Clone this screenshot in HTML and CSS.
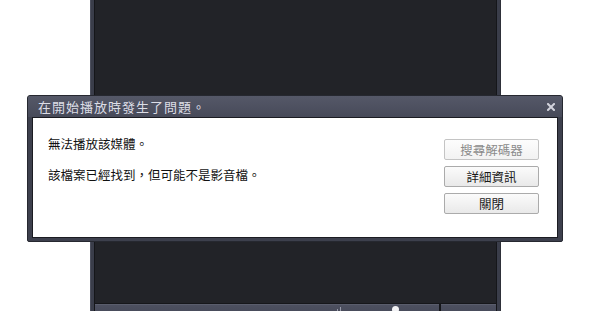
FILE: index.html
```html
<!DOCTYPE html>
<html lang="zh-Hant">
<head>
<meta charset="utf-8">
<title>播放錯誤</title>
<link rel="stylesheet" href="styles.css">
</head>
<body>
<div class="desktop">
  <div class="player">
    <div class="player-inner">
      <div class="video"></div>
      <div class="controls">
        <div class="seek">
          <span class="vol-icon"><i></i><i></i></span>
          <span class="knob"></span>
        </div>
        <div class="side"></div>
      </div>
    </div>
  </div>

  <div class="dialog">
    <div class="titlebar">
      <span class="title">在開始播放時發生了問題。</span>
      <svg class="close" width="8" height="8" viewBox="0 0 8 8"><path d="M1 1L7 7M7 1L1 7" stroke="#d2d3dc" stroke-width="2" stroke-linecap="square"/></svg>
    </div>
    <div class="content">
      <div class="messages">
        <p class="msg">無法播放該媒體。</p>
        <p class="msg">該檔案已經找到，但可能不是影音檔。</p>
      </div>
      <div class="buttons">
        <button class="btn" disabled>搜尋解碼器</button>
        <button class="btn">詳細資訊</button>
        <button class="btn">關閉</button>
      </div>
    </div>
  </div>
</div>
</body>
</html>
```

FILE: styles.css
```css
html, body {
  margin: 0;
  padding: 0;
  background: #ffffff;
  overflow: hidden;
}

.desktop {
  position: relative;
  width: 593px;
  height: 311px;
  font-family: "Noto Sans CJK TC", "Noto Sans", sans-serif;
}

/* background media player window */
.player {
  position: absolute;
  left: 90px;
  top: -20px;
  width: 411px;
  height: 345px;
  box-sizing: border-box;
  background: #3a3d4a;
  border: 1px solid #4c4f5d;
  border-right-color: #2e3039;
  padding: 3px;
  display: flex;
}

.player-inner {
  flex: 1;
  background: #222328;
  border: 1px solid #15161a;
  display: flex;
  flex-direction: column;
}

.video {
  flex: 1;
}

.controls {
  height: 16px;
  display: flex;
  gap: 2px;
  background: #16171b;
  padding-top: 1px;
}

.seek {
  position: relative;
  width: 344px;
  background: linear-gradient(#4d5060, #434655);
  border-top: 1px solid #5a5d6c;
}

.side {
  flex: 1;
  background: linear-gradient(#4d5060, #434655);
  border-top: 1px solid #5a5d6c;
}

.vol-icon {
  position: absolute;
  left: 242px;
  top: 2px;
  display: flex;
  gap: 2px;
  align-items: flex-end;
}

.vol-icon i {
  display: block;
  width: 1px;
  height: 3px;
  background: #9a9cab;
}

.vol-icon i + i {
  height: 5px;
}

.knob {
  position: absolute;
  left: 297px;
  top: 1px;
  width: 7px;
  height: 7px;
  border-radius: 50%;
  background: #f2f2f4;
}

/* error dialog */
.dialog {
  position: absolute;
  left: 27px;
  top: 95px;
  width: 536px;
  height: 147px;
  box-sizing: border-box;
  border: 1px solid #262830;
  border-radius: 3px 3px 2px 2px;
  background: #3d404d;
  padding: 0 4px 3px 4px;
  display: flex;
  flex-direction: column;
  box-shadow: 0 1px 0 #5c5f6c inset;
}

.titlebar {
  height: 21px;
  display: flex;
  align-items: center;
  justify-content: space-between;
  background: linear-gradient(#555868, #474a59);
  margin: 0 -4px;
  padding-left: 10px;
  padding-right: 7px;
  border-radius: 2px 2px 0 0;
}

.title {
  font-size: 13px;
  letter-spacing: 1px;
  color: #dcdde6;
  line-height: 16px;
  margin-top: 1px;
}

.close {
  display: block;
  margin-top: 1px;
}

.content {
  flex: 1;
  background: #ffffff;
  border: 1px solid #1b1c22;
  display: flex;
  justify-content: space-between;
  padding: 0 18px 0 15px;
}

.messages {
  display: flex;
  flex-direction: column;
  gap: 15px;
  padding-top: 18px;
}

.msg {
  margin: 0;
  font-size: 12.5px;
  line-height: 16px;
  color: #111111;
}

.buttons {
  display: flex;
  flex-direction: column;
  gap: 6px;
  padding-top: 21px;
}

.btn {
  width: 95px;
  height: 21px;
  box-sizing: border-box;
  padding: 0;
  font-family: "Noto Sans CJK TC", "Noto Sans", sans-serif;
  font-size: 12.5px;
  line-height: 18px;
  color: #1a1a1a;
  background: linear-gradient(#fbfbfb, #e9e9e9);
  border: 1px solid #ababab;
  border-radius: 2px;
}

.btn:disabled {
  color: #8b8b8b;
  background: linear-gradient(#fdfdfd, #f2f2f2);
  border-color: #c4c4c4;
}
```
